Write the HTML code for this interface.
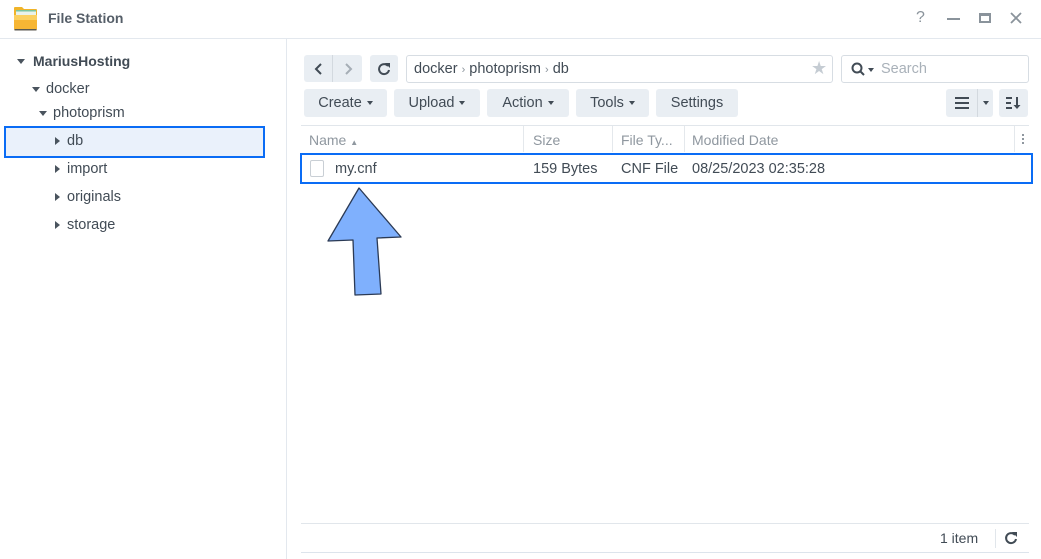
<!DOCTYPE html>
<html><head><meta charset="utf-8"><style>
*{margin:0;padding:0;box-sizing:border-box}
body{width:1041px;height:559px;overflow:hidden;background:#fff;font-family:"Liberation Sans",sans-serif;color:#414b55;position:relative;font-size:14.5px}
.a{position:absolute}
.btn{position:absolute;background:#e9eef3;border-radius:3px;height:28px;line-height:28px;text-align:center;font-size:14.5px;color:#414b55}
.caret{display:inline-block;width:0;height:0;border-left:3.5px solid transparent;border-right:3.5px solid transparent;border-top:4px solid #414b55;vertical-align:middle;margin-left:5px}
.tri-d{position:absolute;width:0;height:0;border-left:4.5px solid transparent;border-right:4.5px solid transparent;border-top:5px solid #4a545e}
.tri-r{position:absolute;width:0;height:0;border-top:4.5px solid transparent;border-bottom:4.5px solid transparent;border-left:5px solid #4a545e}
.hd{position:absolute;top:132px;font-size:14px;color:#8f979f}
.vd{position:absolute;top:126px;width:1px;height:26px;background:#e4e8ec}
</style></head><body>
<svg class="a" style="left:13px;top:5px" width="26" height="27" viewBox="0 0 26 27">
<path d="M1 3Q1 2 2 2h7l2 2h12q1 0 1 1v18H1z" fill="#f0b429"/>
<rect x="3" y="5" width="20" height="6" fill="#7bc4a0"/>
<rect x="3" y="6.5" width="20" height="4.5" fill="#e9f2ea"/>
<path d="M1 10h23v14q0 1-1 1H2q-1 0-1-1z" fill="#f7b634"/>
<path d="M1 10h23v5H1z" fill="#fbd060"/>
<rect x="1.5" y="24" width="22" height="1.5" fill="#5c5a50"/>
</svg>
<div class="a" style="left:48px;top:10px;font-size:14px;font-weight:bold;color:#555e68">File Station</div>
<div class="a" style="left:916px;top:9px;font-size:16px;color:#8a939b">?</div>
<div class="a" style="left:947px;top:18px;width:13px;height:2px;background:#8a939b"></div>
<div class="a" style="left:979px;top:13px;width:12px;height:10px;border:2px solid #8a939b;border-top-width:3px"></div>
<svg class="a" style="left:1010px;top:12px" width="12" height="12"><path d="M1 1L11 11M11 1L1 11" stroke="#8a939b" stroke-width="1.8"/></svg>
<div class="a" style="left:0;top:38px;width:1041px;height:1px;background:#e3e8ee"></div>
<div class="a" style="left:286px;top:39px;width:1px;height:520px;background:#e3e8ee"></div>
<div class="tri-d" style="left:17px;top:59px"></div>
<div class="a" style="left:33px;top:53px;font-weight:bold;font-size:14px;color:#414b55">MariusHosting</div>
<div class="tri-d" style="left:32px;top:87px"></div>
<div class="a" style="left:46px;top:81px">docker</div>
<div class="tri-d" style="left:39px;top:111px"></div>
<div class="a" style="left:53px;top:105px">photoprism</div>
<div class="a" style="left:4px;top:126px;width:261px;height:32px;background:#eaf1fb;border:2px solid #0a6cf5"></div>
<div class="tri-r" style="left:55px;top:137px"></div><div class="a" style="left:67px;top:133px">db</div>
<div class="tri-r" style="left:55px;top:165px"></div><div class="a" style="left:67px;top:161px">import</div>
<div class="tri-r" style="left:55px;top:193px"></div><div class="a" style="left:67px;top:189px">originals</div>
<div class="tri-r" style="left:55px;top:221px"></div><div class="a" style="left:67px;top:217px">storage</div>
<div class="btn" style="left:304px;top:55px;width:58px;height:27px"></div>
<div class="a" style="left:332px;top:55px;width:1px;height:27px;background:#d3d9df"></div>
<svg class="a" style="left:313px;top:62px" width="12" height="14"><path d="M8 2L3 7L8 12" stroke="#414b55" stroke-width="2" fill="none"/></svg>
<svg class="a" style="left:342px;top:62px" width="12" height="14"><path d="M4 2L9 7L4 12" stroke="#a6aeb6" stroke-width="2" fill="none"/></svg>
<div class="btn" style="left:370px;top:55px;width:28px;height:27px"></div>
<svg class="a" style="left:377px;top:62px" width="14" height="14"><path d="M11 4A5 5 0 1 0 12 8" stroke="#414b55" stroke-width="2" fill="none"/><path d="M8 1h5v5z" fill="#414b55"/></svg>
<div class="a" style="left:406px;top:55px;width:427px;height:28px;border:1px solid #d7dde3;border-radius:3px"></div>
<div class="a" style="left:414px;top:61px;color:#414b55">docker <span style="color:#8a939b;font-size:11px">›</span> photoprism <span style="color:#8a939b;font-size:11px">›</span> db</div>
<div class="a" style="left:811px;top:58px;font-size:18px;color:#c5ccd3">★</div>
<div class="a" style="left:841px;top:55px;width:188px;height:28px;border:1px solid #d7dde3;border-radius:3px"></div>
<svg class="a" style="left:851px;top:62px" width="16" height="16"><circle cx="6" cy="6" r="4.5" stroke="#414b55" stroke-width="2" fill="none"/><path d="M9.5 9.5L13 13" stroke="#414b55" stroke-width="2"/></svg>
<div class="a" style="left:868px;top:68px;border-left:3px solid transparent;border-right:3px solid transparent;border-top:4px solid #414b55"></div>
<div class="a" style="left:881px;top:61px;color:#a9b1b9">Search</div>
<div class="btn" style="left:304px;top:89px;width:83px">Create<span class="caret"></span></div>
<div class="btn" style="left:394px;top:89px;width:86px">Upload<span class="caret"></span></div>
<div class="btn" style="left:487px;top:89px;width:82px">Action<span class="caret"></span></div>
<div class="btn" style="left:576px;top:89px;width:73px">Tools<span class="caret"></span></div>
<div class="btn" style="left:656px;top:89px;width:82px">Settings</div>
<div class="btn" style="left:946px;top:89px;width:47px"></div>
<div class="a" style="left:977px;top:89px;width:1px;height:28px;background:#d3d9df"></div>
<div class="a" style="left:955px;top:97px;width:14px;height:2px;background:#414b55;box-shadow:0 5px 0 #414b55,0 10px 0 #414b55"></div>
<div class="a" style="left:983px;top:101px;border-left:3px solid transparent;border-right:3px solid transparent;border-top:4px solid #414b55"></div>
<div class="btn" style="left:999px;top:89px;width:29px"></div>
<svg class="a" style="left:1005px;top:95px" width="18" height="16"><path d="M1 3h6M1 8h5M1 13h6" stroke="#414b55" stroke-width="2"/><path d="M12 2v10" stroke="#414b55" stroke-width="2"/><path d="M8.5 10L12 14L15.5 10z" fill="#414b55"/></svg>
<div class="a" style="left:301px;top:125px;width:728px;height:1px;background:#e1e6eb"></div>
<div class="hd" style="left:309px">Name <span style="font-size:8px">▲</span></div>
<div class="vd" style="left:523px"></div><div class="hd" style="left:533px">Size</div>
<div class="vd" style="left:612px"></div><div class="hd" style="left:621px">File Ty...</div>
<div class="vd" style="left:684px"></div><div class="hd" style="left:692px">Modified Date</div>
<div class="vd" style="left:1014px"></div><div class="a" style="left:1022px;top:134px;width:2px;height:2px;background:#8f979f;box-shadow:0 4px 0 #8f979f,0 8px 0 #8f979f"></div>
<div class="a" style="left:300px;top:153px;width:733px;height:31px;border:2px solid #0a6cf5"></div>
<div class="a" style="left:310px;top:160px;width:14px;height:17px;border:1px solid #c9cfd5;border-radius:2px"></div>
<div class="a" style="left:335px;top:161px">my.cnf</div>
<div class="a" style="left:533px;top:161px">159 Bytes</div>
<div class="a" style="left:621px;top:161px">CNF File</div>
<div class="a" style="left:692px;top:161px">08/25/2023 02:35:28</div>
<svg class="a" style="left:0;top:0" width="1041" height="559"><path d="M359 188L401 237L377 238L381 294L355 295L353 240L328 241Z" fill="#7fb0fd" stroke="#2b3a55" stroke-width="1.3" stroke-linejoin="round"/></svg>
<div class="a" style="left:301px;top:523px;width:728px;height:1px;background:#e1e6eb"></div>
<div class="a" style="left:301px;top:552px;width:728px;height:1px;background:#dde4ec"></div>
<div class="a" style="left:940px;top:530px;font-size:14px">1 item</div>
<div class="a" style="left:995px;top:529px;width:1px;height:19px;background:#e1e6eb"></div>
<svg class="a" style="left:1004px;top:531px" width="14" height="14"><path d="M11 4A5 5 0 1 0 12 8" stroke="#414b55" stroke-width="2" fill="none"/><path d="M8 1h5v5z" fill="#414b55"/></svg>
</body></html>
